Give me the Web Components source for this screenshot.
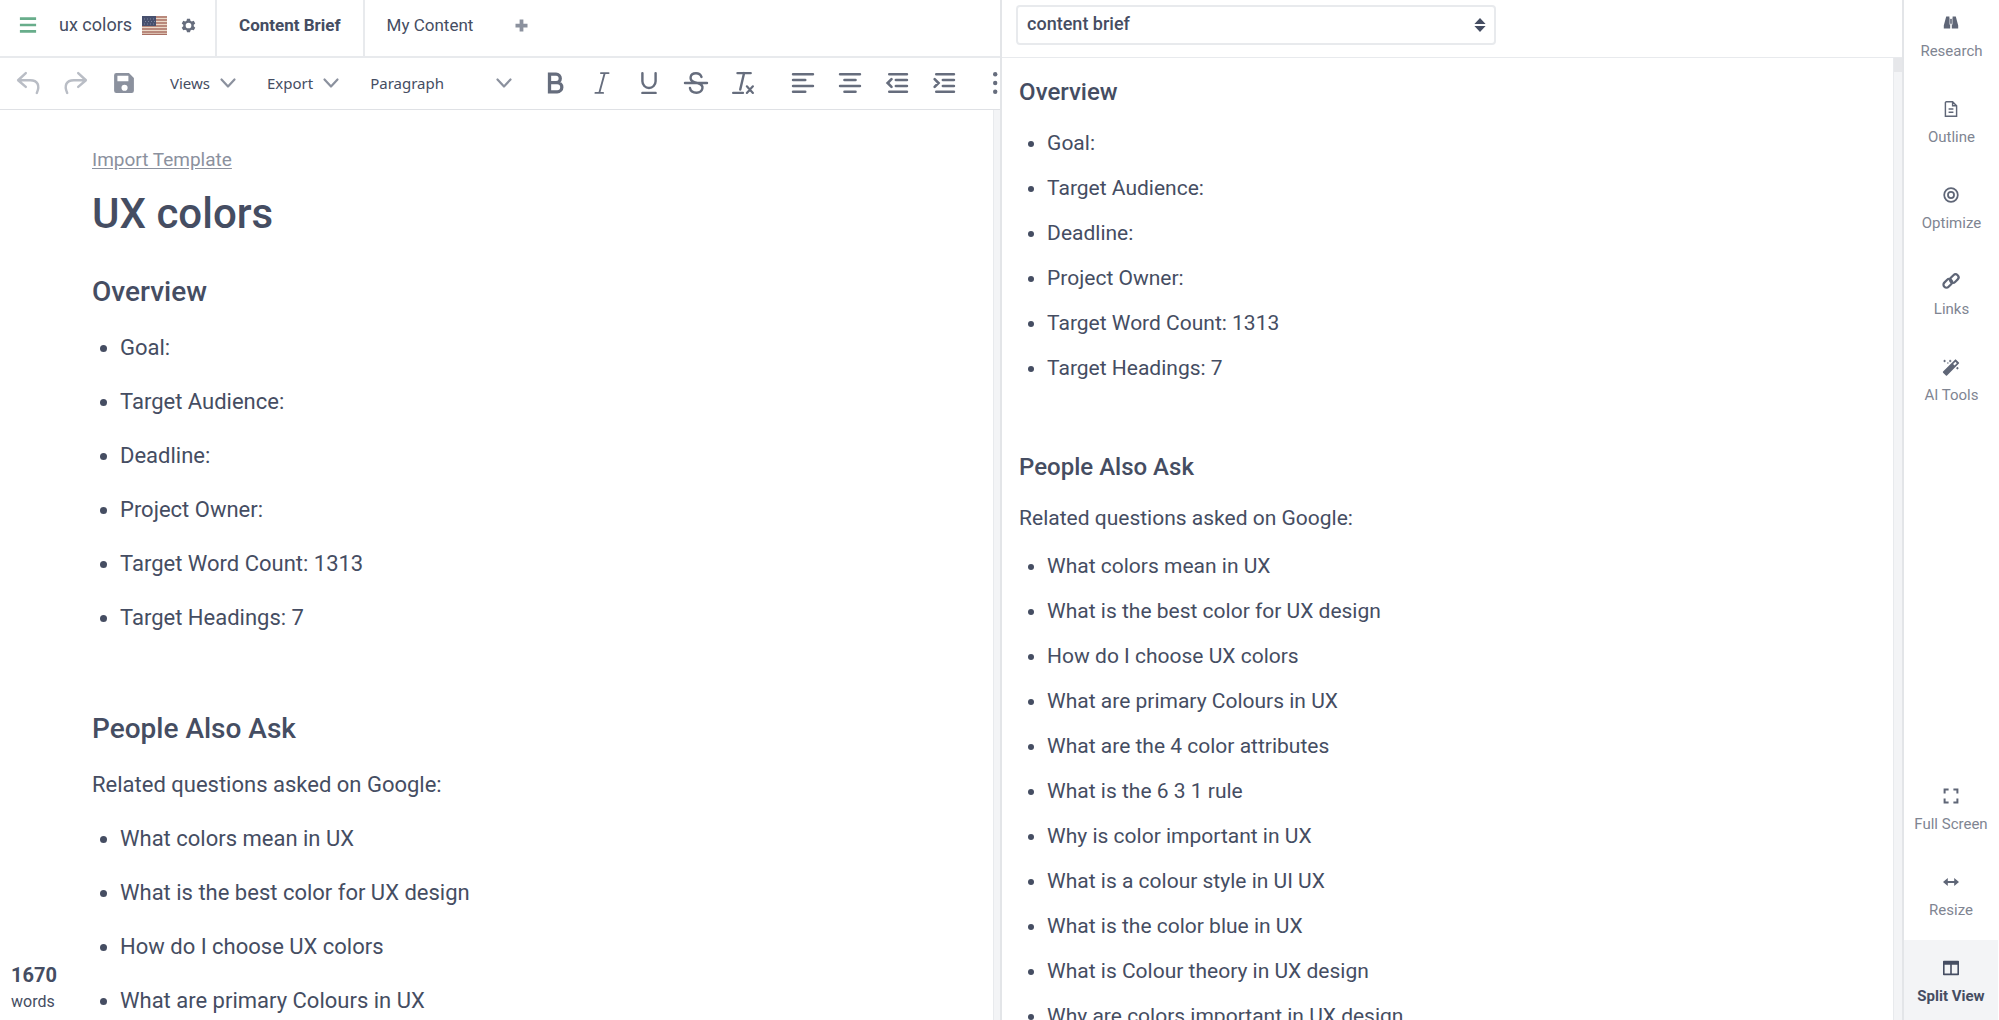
<!DOCTYPE html>
<html lang="en">
<head>
<meta charset="utf-8">
<title>ux colors - Content Brief</title>
<style>
  html, body {
    height: 100%;
    margin: 0;
  }

  body {
    --ink: #454d62;
    --icon: #666d7d;
    --muted: #8b919e;
    --line: #e8eaed;
    --track: #f3f4f6;
    color: var(--ink);
    background: #fff;
    font-family: Roboto, "Liberation Sans", sans-serif;
    overflow: hidden;
  }
</style>
</head>
<body>
<brief-app></brief-app>

<script>
const icons = {
  menu: '<path d="M1 3h18M1 10h18M1 17h18" stroke="#68ad8b" stroke-width="3"/>',
  gear: '<path fill-rule="evenodd" fill="currentColor" d="M8 1h4l.6 2.6 1.8 1 2.6-.8 2 3.4-2 1.9v2l2 1.8-2 3.4-2.6-.8-1.8 1L12 19H8l-.6-2.5-1.8-1-2.6.8-2-3.4 2-1.8v-2L1 7.200l2-3.400 2.600.8 1.800-1zM10 6.200a3.800 3.800 0 1 0 0 7.600a3.800 3.800 0 1 0 0-7.600z"/>',
  plus: '<path d="M10 2v16M2 10h16" stroke="currentColor" stroke-width="5"/>',
  undo: '<path d="M8 1 1 7.500l7 6M1.500 7.500H12c7 0 9 5 6 11.500" fill="none" stroke="currentColor" stroke-width="2.200" stroke-linecap="round" stroke-linejoin="round"/>',
  redo: '<path d="m12 1 7 6.500-7 6M18.500 7.500H8c-7 0-9 5-6 11.500" fill="none" stroke="currentColor" stroke-width="2.200" stroke-linecap="round" stroke-linejoin="round"/>',
  save: '<path fill-rule="evenodd" fill="currentColor" d="M3 1h11.500L19 5.500V17a2 2 0 0 1-2 2H3a2 2 0 0 1-2-2V3a2 2 0 0 1 2-2zM4 3.500v5h10v-5zM10.500 11.500a2.800 2.800 0 1 0 0 5.600a2.800 2.800 0 1 0 0-5.600z"/>',
  chevron: '<path d="m3.500 6.500 6.500 7 6.500-7" fill="none" stroke="currentColor" stroke-width="2.200" stroke-linecap="round" stroke-linejoin="round"/>',
  bold: '<path d="M5 2h6a3.800 3.800 0 0 1 0 7.600H5zM5 9.600h7a4.200 4.200 0 0 1 0 8.400H5z" fill="none" stroke="currentColor" stroke-width="3"/>',
  italic: '<path d="M9 1h7M4 19h7M12.500 1l-5 18" fill="none" stroke="currentColor" stroke-width="1.700" stroke-linecap="round"/>',
  underline: '<path d="M4 1v7.500a6 6 0 0 0 12 0V1M4 19h12" fill="none" stroke="currentColor" stroke-width="2.200" stroke-linecap="round"/>',
  strike: '<path d="M15 4.500C14 2 12.500 1.200 10 1.200c-6 0-6.500 6.500-1.500 8l3.500 1c6.500 2 4 8.600-1.500 8.600-3.500 0-5.500-1.600-6-4.300M0 10h20" fill="none" stroke="currentColor" stroke-width="2.200" stroke-linecap="round"/>',
  clear: '<path d="M5 1h12M11 1 7.500 16" fill="none" stroke="currentColor" stroke-width="2.200" stroke-linecap="round"/><path d="M1 19h9M13.500 13l5.500 6M19 13l-5.500 6" stroke="currentColor" stroke-width="2" stroke-linecap="round"/>',
  left: '<path d="M1 2h18M1 7.300h11M1 12.700h18M1 18h11" stroke="currentColor" stroke-width="2.400" stroke-linecap="round"/>',
  center: '<path d="M1 2h18M5 7.300h10M1 12.700h18M5 18h10" stroke="currentColor" stroke-width="2.400" stroke-linecap="round"/>',
  outdent: '<path d="M3 2h16M9 7.300h10M9 12.700h10M3 18h16M5 6.500 1.500 10 5 13.500" fill="none" stroke="currentColor" stroke-width="2.400" stroke-linecap="round"/>',
  indent: '<path d="M3 2h16M9 7.300h10M9 12.700h10M3 18h16M1.500 6.500 5 10l-3.500 3.500" fill="none" stroke="currentColor" stroke-width="2.400" stroke-linecap="round"/>',
  bullets: '<g fill="currentColor"><circle cx="2" cy="2" r="2"/><circle cx="2" cy="10" r="2"/><circle cx="2" cy="18" r="2"/></g><path d="M8 2h12M8 10h12M8 18h12" stroke="currentColor" stroke-width="2" stroke-linecap="round"/>',
  sort: '<path d="m10 0 8 8.500H2zM10 20l8-8.500H2z" fill="currentColor"/>',
  research: '<path fill="currentColor" d="M4 2h4v2h1v13H1v-4zM12 2h4l3 11v4h-8V4h1zM9 5h2v6H9z"/><path d="M8.500 4v8M11.500 4v8" stroke="#fff" stroke-width=".8"/>',
  outline: '<path d="M4 1h8l5 5v13H3V2zM12 1v5h5M7 10h6M7 14h6" fill="none" stroke="currentColor" stroke-width="1.800"/>',
  optimize: '<g fill="none" stroke="currentColor" stroke-width="2.200"><circle cx="10" cy="10" r="8.500"/><circle cx="10" cy="10" r="3.800"/></g>',
  links: '<g fill="none" stroke="currentColor" stroke-width="2.800" transform="rotate(-45 10 10)"><rect x="-1" y="5.500" width="12" height="7.500" rx="3.700"/><rect x="9" y="7" width="12" height="7.500" rx="3.700"/></g>',
  wand: '<g transform="rotate(-45 10 10)"><rect x="-2" y="7" width="23" height="7" rx="1" fill="currentColor"/><path d="M14.500 10.500h4" stroke="#fff" stroke-width="2.500"/></g><path d="M2 1v3M.5 2.500h3M9 1v3M7.500 2.500h3M18 10v3M16.500 11.500h3M5 5h2" stroke="currentColor" stroke-width="1.200"/>',
  full: '<path d="M2 7V2h5M13 2h5v5M18 13v5h-5M7 18H2v-5" fill="none" stroke="currentColor" stroke-width="2.500"/>',
  resize: '<path d="M3 10h14" stroke="currentColor" stroke-width="2.500"/><path d="M0 10l6-5v10zM20 10l-6-5v10z" fill="currentColor"/>',
  split: '<path fill-rule="evenodd" fill="currentColor" d="M1 1h18a1 1 0 0 1 1 1v16a1 1 0 0 1-1 1H1a1 1 0 0 1-1-1V2a1 1 0 0 1 1-1zM2 6v11h7V6zM11 6v11h7V6z"/>',
};

const goals = [
  'Goal:',
  'Target Audience:',
  'Deadline:',
  'Project Owner:',
  'Target Word Count: 1313',
  'Target Headings: 7',
];

const questions = [
  'What colors mean in UX',
  'What is the best color for UX design',
  'How do I choose UX colors',
  'What are primary Colours in UX',
  'What are the 4 color attributes',
  'What is the 6 3 1 rule',
  'Why is color important in UX',
  'What is a colour style in UI UX',
  'What is the color blue in UX',
  'What is Colour theory in UX design',
  'Why are colors important in UX design',
];

const toItems = list => list.map(text => `<li>${text}</li>`).join('');

// Builds the shadow root from a template string.
class BaseElement extends HTMLElement {
  constructor() {
    super();
    this.attachShadow({mode: 'open'});
  }

  connectedCallback() {
    const template = document.createElement('template');
    template.innerHTML = this.render();
    this.shadowRoot.replaceChildren(template.content.cloneNode(true));
  }
}

class AppIcon extends BaseElement {
  render() {
    const size = this.getAttribute('size') || 20;
    return `
      <style>
        :host { display: inline-flex; flex: none; }
        svg { display: block; overflow: visible; }
      </style>
      <svg width="${size}" height="${size}" viewBox="0 0 20 20" aria-hidden="true">${icons[this.getAttribute('name')]}</svg>
    `;
  }
}

class UsFlag extends BaseElement {
  render() {
    return `
      <style>
        :host { display: inline-flex; flex: none; }
      </style>
      <svg width="25" height="19" viewBox="0 0 25 19" role="img" aria-label="United States">
        <path fill="#ead9c8" d="M0 0h25v19H0z"/>
        <path stroke="#a96f63" stroke-width="1.500" d="M0 1h25M0 4h25M0 7h25M0 10h25M0 13h25M0 16h25M0 18.500h25"/>
        <path fill="#47506e" d="M0 0h14v10H0z"/>
        <path stroke="#7e86a0" stroke-dasharray="1 2" d="M2 3h11M3 5.500h10M2 8h11"/>
      </svg>
    `;
  }
}

class DocTab extends BaseElement {
  render() {
    return `
      <style>
        :host { display: flex; }
        button {
          padding: 0 22px 6px;
          border: 0;
          border-right: 2px solid transparent;
          background: none;
          color: inherit;
          font: 400 17px/24px Roboto, sans-serif;
          white-space: nowrap;
        }
        :host([selected]) button {
          border-right-color: var(--line);
          font-weight: 700;
        }
      </style>
      <button role="tab"><slot></slot></button>
    `;
  }
}

class TopBar extends BaseElement {
  render() {
    return `
      <style>
        :host {
          display: flex;
          height: 56px;
          border-bottom: 2px solid var(--line);
        }
        .project {
          display: flex;
          align-items: center;
          padding: 0 19px 6px 19px;
          border-right: 2px solid var(--line);
          font-size: 18px;
          line-height: 24px;
          white-space: nowrap;
        }
        button {
          display: flex;
          padding: 0;
          border: 0;
          background: none;
          color: var(--icon);
        }
        .menu { margin-right: 22px; }
        us-flag { margin: 0 14px 0 10px; }
        .add {
          align-items: center;
          margin-left: 17px;
          padding-bottom: 6px;
          color: var(--muted);
        }
      </style>
      <div class="project">
        <button class="menu" aria-label="Menu"><app-icon name="menu" size="18"></app-icon></button>
        <span>ux colors</span>
        <us-flag></us-flag>
        <button aria-label="Settings"><app-icon name="gear" size="15"></app-icon></button>
      </div>
      <doc-tab selected>Content Brief</doc-tab>
      <doc-tab>My Content</doc-tab>
      <button class="add" aria-label="Add tab"><app-icon name="plus" size="15"></app-icon></button>
    `;
  }
}

class ToolButton extends BaseElement {
  render() {
    const label = this.getAttribute('label');
    return `
      <style>
        :host { display: inline-flex; flex: none; }
        button {
          display: flex;
          align-items: center;
          justify-content: center;
          width: 47px;
          height: 40px;
          padding: 0;
          border: 0;
          background: none;
          color: inherit;
        }
      </style>
      <button aria-label="${label}" title="${label}"><app-icon name="${this.getAttribute('icon')}" size="22"></app-icon></button>
    `;
  }
}

class ToolMenu extends BaseElement {
  render() {
    return `
      <style>
        :host { display: inline-flex; flex: none; }
        button {
          display: flex;
          flex: 1;
          align-items: center;
          justify-content: space-between;
          gap: 8px;
          padding: 0;
          border: 0;
          background: none;
          color: var(--ink);
          font: 400 15px/24px "Noto Sans", sans-serif;
        }
        app-icon { color: var(--muted); }
      </style>
      <button aria-haspopup="menu"><slot></slot><app-icon name="chevron"></app-icon></button>
    `;
  }
}

class EditorToolbar extends BaseElement {
  render() {
    return `
      <style>
        :host {
          display: flex;
          align-items: center;
          height: 49px;
          padding: 0 0 2px 4px;
          border-bottom: 1px solid #dfe1e5;
          color: var(--icon);
          overflow: hidden;
        }
        .history { display: flex; gap: 1px; color: #b9bdc5; }
        .history :last-child { color: var(--muted); }
        .menus { display: flex; gap: 29px; margin: 0 17px 0 23px; }
        .block { width: 144px; }
        .group { display: flex; margin-right: 13px; }
      </style>
      <div class="history">
        <tool-button icon="undo" label="Undo"></tool-button>
        <tool-button icon="redo" label="Redo"></tool-button>
        <tool-button icon="save" label="Save"></tool-button>
      </div>
      <div class="menus">
        <tool-menu>Views</tool-menu>
        <tool-menu>Export</tool-menu>
        <tool-menu class="block">Paragraph</tool-menu>
      </div>
      <div class="group">
        <tool-button icon="bold" label="Bold"></tool-button>
        <tool-button icon="italic" label="Italic"></tool-button>
        <tool-button icon="underline" label="Underline"></tool-button>
        <tool-button icon="strike" label="Strikethrough"></tool-button>
        <tool-button icon="clear" label="Clear formatting"></tool-button>
      </div>
      <div class="group">
        <tool-button icon="left" label="Align left"></tool-button>
        <tool-button icon="center" label="Align center"></tool-button>
        <tool-button icon="outdent" label="Decrease indent"></tool-button>
        <tool-button icon="indent" label="Increase indent"></tool-button>
      </div>
      <tool-button icon="bullets" label="Bullet list"></tool-button>
    `;
  }
}

class BriefSection extends BaseElement {
  render() {
    const note = this.getAttribute('note');
    return `
      <style>
        :host { display: block; }
        h2 {
          margin: 0 0 var(--heading-gap);
          font-size: var(--heading-size);
          font-weight: 500;
          line-height: 32px;
        }
        p {
          margin: 0 0 var(--note-gap);
          line-height: 30px;
        }
        ul {
          margin: 0;
          padding-left: 28px;
        }
        ::slotted(li) {
          margin-bottom: var(--item-gap);
          line-height: 30px;
        }
      </style>
      <h2>${this.getAttribute('heading')}</h2>
      ${note ? `<p>${note}</p>` : ''}
      <ul><slot></slot></ul>
    `;
  }
}

// limit: how many of the questions to list, all of them by default
class BriefDocument extends BaseElement {
  render() {
    const limit = parseInt(this.getAttribute('limit')) || questions.length;
    return `
      <style>
        :host {
          display: flex;
          flex-direction: column;
          gap: var(--section-gap);
          font-size: var(--text-size);
        }
      </style>
      <brief-section heading="Overview">${toItems(goals)}</brief-section>
      <brief-section heading="People Also Ask" note="Related questions asked on Google:">
        ${toItems(questions.slice(0, limit))}
      </brief-section>
    `;
  }
}

class WordCount extends BaseElement {
  render() {
    return `
      <style>
        :host {
          display: block;
          font-size: 16px;
          line-height: 24px;
        }
        strong {
          display: block;
          font-size: 20px;
          line-height: 30px;
        }
      </style>
      <strong><slot></slot></strong>words
    `;
  }
}

class EditorPane extends BaseElement {
  render() {
    return `
      <style>
        :host {
          display: flex;
          flex-direction: column;
          min-height: 0;
          border-right: 2px solid #e3e5e8;
        }
        .page {
          display: grid;
          grid-template-columns: 81px minmax(0, 1fr) 7px;
          flex: 1;
          min-height: 0;
          padding-left: 11px;
          overflow: hidden;
        }
        word-count { align-self: end; margin-bottom: 6px; }
        .track {
          border-left: 1px solid var(--line);
          background: var(--track);
        }
        article { min-height: 0; padding-top: 37px; }
        a {
          display: inline-block;
          color: var(--muted);
          font-size: 19px;
          line-height: 26px;
          text-underline-offset: 2px;
        }
        h1 {
          margin: 13px 0 34px;
          font-size: 42px;
          font-weight: 500;
          line-height: 56px;
        }
        brief-document {
          --text-size: 22px;
          --heading-size: 28px;
          --heading-gap: 25px;
          --note-gap: 24px;
          --item-gap: 24px;
          --section-gap: 56px;
        }
      </style>
      <top-bar></top-bar>
      <editor-toolbar></editor-toolbar>
      <div class="page">
        <word-count>1670</word-count>
        <article>
          <a href="#import">Import Template</a>
          <h1>UX colors</h1>
          <brief-document limit="4"></brief-document>
        </article>
        <div class="track"></div>
      </div>
    `;
  }
}

class ReferencePane extends BaseElement {
  render() {
    return `
      <style>
        :host {
          display: flex;
          flex-direction: column;
          min-height: 0;
          border-right: 2px solid #e3e5e8;
        }
        header {
          height: 52px;
          padding: 5px 0 0 14px;
          border-bottom: 1px solid var(--line);
        }
        .picker {
          display: grid;
          align-items: center;
          width: 480px;
          max-width: 100%;
        }
        .picker > * { grid-area: 1 / 1; }
        select {
          height: 40px;
          padding: 0 9px 2px;
          border: 2px solid var(--line);
          border-radius: 4px;
          background: #fff;
          color: inherit;
          font: 500 18px/24px Roboto, sans-serif;
          appearance: none;
        }
        app-icon {
          justify-self: end;
          margin-right: 9px;
          pointer-events: none;
        }
        .page {
          display: grid;
          grid-template-columns: minmax(0, 1fr) 9px;
          flex: 1;
          min-height: 0;
          overflow: hidden;
        }
        .track {
          border-left: 1px solid var(--line);
          background: var(--track);
        }
        .thumb { height: 14px; background: #e6e7ea; }
        brief-document {
          min-height: 0;
          padding: 18px 0 0 17px;
          --text-size: 21px;
          --heading-size: 24px;
          --heading-gap: 20px;
          --note-gap: 18px;
          --item-gap: 15px;
          --section-gap: 53px;
        }
      </style>
      <header>
        <div class="picker">
          <select aria-label="Document"><option>content brief</option></select>
          <app-icon name="sort" size="14"></app-icon>
        </div>
      </header>
      <div class="page">
        <brief-document></brief-document>
        <div class="track"><div class="thumb"></div></div>
      </div>
    `;
  }
}

class RailItem extends BaseElement {
  render() {
    return `
      <style>
        :host { display: block; }
        button {
          display: flex;
          flex-direction: column;
          align-items: center;
          gap: 9px;
          width: 100%;
          height: 80px;
          padding: 20px 0 0;
          border: 0;
          background: none;
          color: #7f8592;
          font: 400 15px/22px Roboto, sans-serif;
          white-space: nowrap;
        }
        app-icon { color: #5f6677; }
        :host([active]) button {
          background: var(--track);
          color: var(--ink);
          font-weight: 700;
        }
        :host([active]) app-icon { color: var(--ink); }
      </style>
      <button><app-icon name="${this.getAttribute('icon')}" size="16"></app-icon><slot></slot></button>
    `;
  }
}

class ToolRail extends BaseElement {
  render() {
    return `
      <style>
        :host {
          display: flex;
          flex-direction: column;
          justify-content: space-between;
          min-height: 0;
        }
        nav {
          display: flex;
          flex-direction: column;
          gap: 6px;
        }
        nav:first-of-type { margin-top: -5px; }
        nav:last-of-type { margin-right: 1px; }
      </style>
      <nav aria-label="Tools">
        <rail-item icon="research">Research</rail-item>
        <rail-item icon="outline">Outline</rail-item>
        <rail-item icon="optimize">Optimize</rail-item>
        <rail-item icon="links">Links</rail-item>
        <rail-item icon="wand">AI Tools</rail-item>
      </nav>
      <nav aria-label="View">
        <rail-item icon="full">Full Screen</rail-item>
        <rail-item icon="resize">Resize</rail-item>
        <rail-item icon="split" active>Split View</rail-item>
      </nav>
    `;
  }
}

class BriefApp extends BaseElement {
  render() {
    return `
      <style>
        :host {
          display: grid;
          grid-template-columns: minmax(0, 10fr) minmax(0, 9fr) 95px;
          grid-template-rows: minmax(0, 1fr);
          height: 100vh;
          overflow: hidden;
        }
      </style>
      <editor-pane></editor-pane>
      <reference-pane></reference-pane>
      <tool-rail></tool-rail>
    `;
  }
}

window.customElements.define('app-icon', AppIcon);
window.customElements.define('us-flag', UsFlag);
window.customElements.define('doc-tab', DocTab);
window.customElements.define('top-bar', TopBar);
window.customElements.define('tool-button', ToolButton);
window.customElements.define('tool-menu', ToolMenu);
window.customElements.define('editor-toolbar', EditorToolbar);
window.customElements.define('brief-section', BriefSection);
window.customElements.define('brief-document', BriefDocument);
window.customElements.define('word-count', WordCount);
window.customElements.define('editor-pane', EditorPane);
window.customElements.define('reference-pane', ReferencePane);
window.customElements.define('rail-item', RailItem);
window.customElements.define('tool-rail', ToolRail);
window.customElements.define('brief-app', BriefApp);
</script>
</body>
</html>
